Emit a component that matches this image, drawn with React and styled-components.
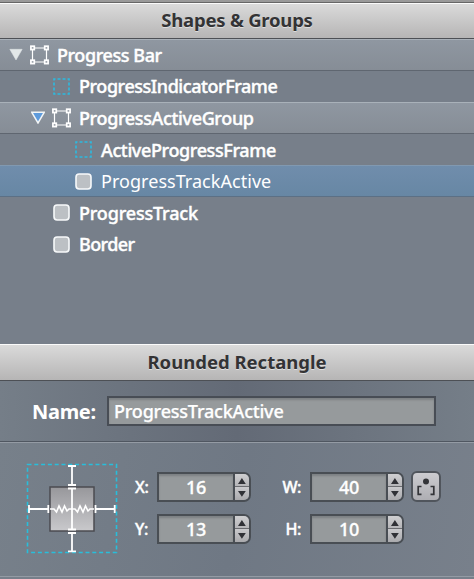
import React from 'react';
import styled, { createGlobalStyle } from 'styled-components';

const GlobalStyle = createGlobalStyle`
  * {
    box-sizing: border-box;
  }
  body {
    margin: 0;
    background: #777f8a;
    font-family: "Noto Sans", "Open Sans", sans-serif;
  }
`
const Panel = styled.div`
  width: 474px;
  height: 579px;
  overflow: hidden;
  color: #fff;
  background: #777f8a;
  display: flex;
  flex-direction: column;
`
const TopEdge = styled.div`
  height: 3px;
  flex: none;
  background: #999;
  border-bottom: 1px solid #666;
`
const Header = styled.div`
  height: ${props => props.$height}px;
  flex: none;
  display: flex;
  align-items: center;
  justify-content: center;
  padding-bottom: ${props => props.$lift}px;
  background: linear-gradient(#dadada, #b6b5b5);
  border-top: 1px solid #fafafa;
  border-bottom: 1px solid #4d5055;
  color: #333335;
  font-size: 18.5px;
  font-weight: 700;
  letter-spacing: ${props => props.$spacing || 0}px;
  text-shadow: 0 1px 0 rgba(255, 255, 255, 0.5);
`
const Tree = styled.div`
  height: 305px;
  flex: none;
`
const rowColors = {
  group: 'linear-gradient(#8f97a1, #868d96)',
  selected: 'linear-gradient(#708dac, #6787a4)',
  plain: 'none',
}
const Row = styled.div`
  height: 31.6px;
  display: flex;
  align-items: center;
  padding-left: ${props => props.$indent}px;
  background: ${props => rowColors[props.$kind]};
  border-top: 1px solid ${props => ({ group: '#a9b1b9', selected: '#8199b1', plain: 'transparent' })[props.$kind]};
  border-bottom: 1px solid ${props => ({ group: '#5f6670', selected: '#5c7085', plain: 'transparent' })[props.$kind]};
`
const Icon = styled.svg`
  display: block;
  flex: none;
  margin-right: ${props => props.$gap || 0}px;
`
const RowText = styled.span`
  font-size: 18px;
  line-height: 24px;
  white-space: nowrap;
  font-weight: ${props => props.$selected ? 400 : 500};
  letter-spacing: ${props => props.$spacing}px;
  -webkit-text-stroke: ${props => props.$selected ? 0 : 0.4}px #fff;
`
const NameSection = styled.div`
  height: 61px;
  flex: none;
  display: flex;
  align-items: center;
  padding-left: 32px;
  background: linear-gradient(90deg, #757e88, #636a76 50%, #757e88);
  border-bottom: 1px solid #505761;
`
const NameLabel = styled.label`
  width: 75px;
  font-size: 20px;
  font-weight: 700;
  letter-spacing: -0.3px;
`
const NameField = styled.div`
  width: 329px;
  height: 30px;
  padding-left: 5px;
  display: flex;
  align-items: center;
  background: #969a9c;
  border: 2px solid #484d55;
  box-shadow: inset 0 2px 2px rgba(50, 55, 60, 0.25);
  font-size: 18px;
  font-weight: 500;
  letter-spacing: -0.2px;
  -webkit-text-stroke: 0.25px #fff;
`
const Geometry = styled.div`
  height: 135px;
  flex: none;
  display: flex;
  align-items: flex-start;
  padding: 20px 0 0 26px;
  border-top: 1px solid #949ba4;
  border-bottom: 1px solid #949ba4;
  background: linear-gradient(100deg, #77808a, #6f7884 50%, #78808b);
`
const Fields = styled.div`
  display: grid;
  grid-template-columns: 22px 94px;
  grid-auto-rows: 30px;
  row-gap: 12px;
  align-items: center;
  margin: 9px 0 0 ${props => props.$left}px;
`
const FieldLabel = styled.label`
  font-size: 16px;
  font-weight: 500;
  white-space: nowrap;
  letter-spacing: -0.4px;
  -webkit-text-stroke: 0.4px #fff;
  justify-self: ${props => props.$end ? 'end' : 'start'};
  margin-right: ${props => props.$end ? 9 : 0}px;
`
const Stepper = styled.div`
  width: 94px;
  height: 30px;
  display: flex;
  border: 2px solid #494e54;
  border-radius: 0 7px 7px 0;
  overflow: hidden;
`
const Value = styled.div`
  flex: 1;
  display: flex;
  align-items: center;
  justify-content: center;
  background: #969a9c;
  border-right: 2px solid #494e54;
  box-shadow: inset 0 2px 2px rgba(50, 55, 60, 0.25);
  font-size: 18px;
  font-weight: 500;
  letter-spacing: -0.4px;
  -webkit-text-stroke: 0.3px #fff;
`
const Arrows = styled.div`
  width: 14px;
  background: linear-gradient(#cfcfd1 0, #b5b5b8 12px, #6b6c70 12px, #6b6c70 13px, #c9c9cc 13px, #aaaaad);
`
const ConstrainButton = styled.button`
  width: 30px;
  height: 31px;
  margin: 8px 0 0 7px;
  padding: 0;
  border: 2px solid #50555c;
  border-radius: 6px;
  background: linear-gradient(#ccccd0, #aeaeb3);
  display: flex;
  align-items: center;
  justify-content: center;
`

function Disclosure({ active }) {
  return (
    <Icon width="14" height="13" $gap={7}>
      <path d="M0.8 1.3H13.2L7 12Z" fill={active ? '#5e9bdc' : '#e2e7e8'} stroke={active ? '#f2f5f6' : '#e2e7e8'} strokeWidth={active ? 1.5 : 0.5} />
    </Icon>
  )
}

function GroupIcon() {
  return (
    <Icon width="19" height="20" $gap={8}>
      <g fill="none" stroke="#fff">
        <path d="M2.5 3H16.5V17H2.5Z" strokeWidth="1.2" />
        <g fill="#9ba1a9" strokeWidth="1.7">
          <rect x="0.9" y="1.2" width="3.4" height="3.4" />
          <rect x="14.7" y="1.2" width="3.4" height="3.4" />
          <rect x="0.9" y="15.2" width="3.4" height="3.4" />
          <rect x="14.7" y="15.2" width="3.4" height="3.4" />
        </g>
      </g>
    </Icon>
  )
}

function FrameIcon() {
  return (
    <Icon width="17" height="17" $gap={9}>
      <rect x="1" y="1" width="15" height="15" fill="none" stroke="#2cbbe0" strokeWidth="1.6" strokeDasharray="3 2" strokeDashoffset="1.5" />
    </Icon>
  )
}

function ShapeIcon() {
  return (
    <Icon width="17" height="17" $gap={9}>
      <rect x="1" y="1" width="15" height="15" rx="3.2" fill="#bcc0c4" stroke="#f7f9fa" strokeWidth="1.6" />
    </Icon>
  )
}

function SpringsDiagram() {
  return (
    <Icon width="92" height="92">
      <defs>
        <linearGradient id="box" x1="0" y1="0" x2="0" y2="1">
          <stop offset="0" stopColor="#97979b" />
          <stop offset="1" stopColor="#c9c9cc" />
        </linearGradient>
      </defs>
      <rect x="1.5" y="1.5" width="89" height="88" fill="none" stroke="#28bedb" strokeWidth="1.6" strokeDasharray="4 2.8" />
      <rect x="24" y="24" width="44" height="44" fill="url(#box)" stroke="#4b4b50" strokeWidth="1.5" />
      <g fill="none" stroke="#fff" strokeWidth="1.8">
        <path d="M46 3V22M46 26V66M46 70V88" />
        <path d="M42 3H50M42 22H50M42 25.5H50M42 66.5H50M42 70H50M42 88.3H50" />
        <path d="M3 46H22M70 46H89M3 42V50M22.3 42V50M69.5 42V50M88.7 42V50" />
        <path d="M24 46H28L30.5 49L33 43L36 49L38.5 43L41 48L43 46H49L51.5 49L54 43L57 49L59.5 43L62 48L64 46H68" strokeWidth="1.6" />
      </g>
    </Icon>
  )
}

function NumberField({ label, value, end }) {
  return (
    <>
      <FieldLabel $end={end}>{label}</FieldLabel>
      <Stepper>
        <Value>{value}</Value>
        <Arrows>
          <Icon width="14" height="26">
            <path d="M3 10H10.8L6.9 4ZM3 17H10.8L6.9 22.8Z" fill="#303136" />
          </Icon>
        </Arrows>
      </Stepper>
    </>
  )
}

const icons = { group: GroupIcon, frame: FrameIcon, shape: ShapeIcon }

const items = [
  { name: 'Progress Bar', icon: 'group', kind: 'group', indent: 9, spacing: -0.43 },
  { name: 'ProgressIndicatorFrame', icon: 'frame', kind: 'plain', indent: 53, spacing: -0.45 },
  { name: 'ProgressActiveGroup', icon: 'group', kind: 'group', indent: 31, active: true, spacing: -0.36 },
  { name: 'ActiveProgressFrame', icon: 'frame', kind: 'plain', indent: 75, spacing: -0.38 },
  { name: 'ProgressTrackActive', icon: 'shape', kind: 'selected', indent: 75, spacing: 0.04 },
  { name: 'ProgressTrack', icon: 'shape', kind: 'plain', indent: 53, spacing: -0.18 },
  { name: 'Border', icon: 'shape', kind: 'plain', indent: 53, spacing: -0.6 },
]

class App extends React.Component {
  renderItem(item) {
    const ItemIcon = icons[item.icon]

    return (
      <Row key={item.name} $kind={item.kind} $indent={item.indent}>
        {item.icon === 'group' && <Disclosure active={item.active} />}
        <ItemIcon />
        <RowText $selected={item.kind === 'selected'} $spacing={item.spacing}>{item.name}</RowText>
      </Row>
    )
  }

  render() {
    return (
      <Panel>
        <GlobalStyle />
        <TopEdge />
        <Header $height={36} $lift={3} $spacing={-0.22}>Shapes &amp; Groups</Header>
        <Tree>{items.map(this.renderItem)}</Tree>
        <Header $height={37} $lift={3} $spacing={0}>Rounded Rectangle</Header>
        <NameSection>
          <NameLabel>Name:</NameLabel>
          <NameField>ProgressTrackActive</NameField>
        </NameSection>
        <Geometry>
          <SpringsDiagram />
          <Fields $left={17}>
            <NumberField label="X:" value="16" />
            <NumberField label="Y:" value="13" />
          </Fields>
          <Fields $left={37}>
            <NumberField label="W:" value="40" end />
            <NumberField label="H:" value="10" end />
          </Fields>
          <ConstrainButton>
            <Icon width="20" height="20">
              <circle cx="10" cy="4.5" r="3" fill="#333438" />
              <path d="M5.5 9.5H2.2V17.3H5.5M14.5 9.5H17.8V17.3H14.5" fill="none" stroke="#333438" strokeWidth="1.7" />
            </Icon>
          </ConstrainButton>
        </Geometry>
      </Panel>
    )
  }
}

export default App;
